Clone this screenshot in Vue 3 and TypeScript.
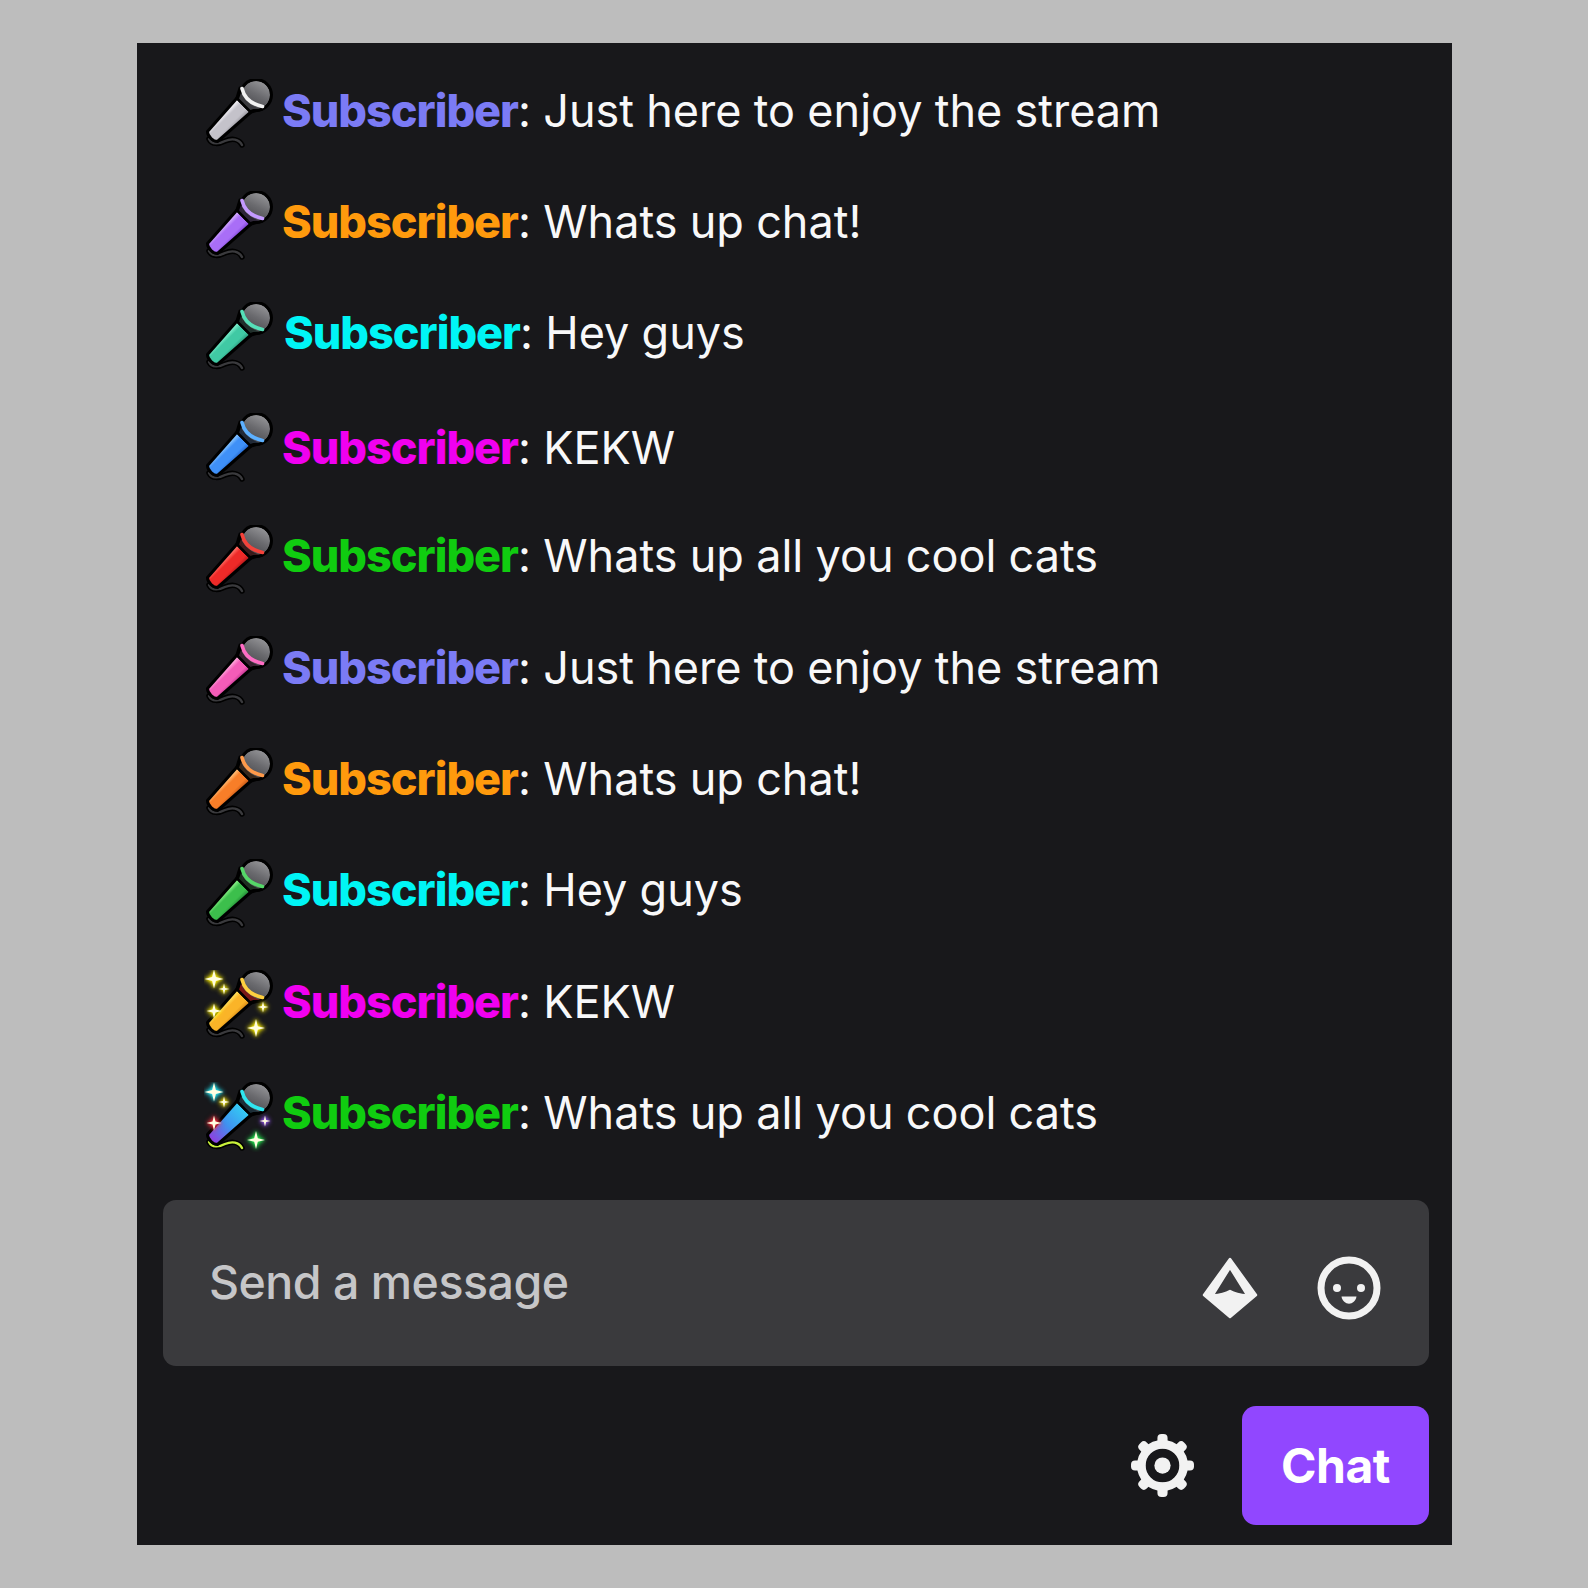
<script setup lang="ts">
interface Spark { x: number; y: number; r: number; c: string }
interface Row {
  msg: string; color: string;
  top: string; mid: string; low: string; band: string; collar: string; cable: string;
  sparks?: Spark[]; nudge?: string; along?: boolean;
}
const gold: Spark[] = [
  { x: 10, y: 9, r: 9.5, c: '#fff200' }, { x: 20, y: 19, r: 5.5, c: '#fff200' },
  { x: 10, y: 41, r: 7.5, c: '#fff200' }, { x: 59, y: 37, r: 5.5, c: '#fff200' }, { x: 52, y: 58, r: 9, c: '#fff200' },
];
const rainbow: Spark[] = [
  { x: 10, y: 10, r: 9.5, c: '#22e8f5' }, { x: 20, y: 20, r: 5.5, c: '#fff200' },
  { x: 10, y: 41, r: 7.5, c: '#ff2a3a' }, { x: 61, y: 39, r: 5.5, c: '#9a55ff' }, { x: 52, y: 58, r: 9, c: '#20f050' },
];
const cord = '#3a3a3d';
const rows: Row[] = [
  { msg: 'Just here to enjoy the stream', color: '#7b7bf5', top: '#eceaf0', mid: '#c4c2ca', low: '#9a98a0', band: '#f2f2f2', collar: '#3a3a3e', cable: cord },
  { msg: 'Whats up chat!', color: '#ff9a0d', top: '#cfa6ff', mid: '#a96ef7', low: '#8144d8', band: '#c39aff', collar: '#2b2336', cable: cord },
  { msg: 'Hey guys', color: '#00f5f5', top: '#78ebc9', mid: '#40c9a4', low: '#2a9a7c', band: '#55dfb8', collar: '#1f2e2a', cable: cord, nudge: 'shift' },
  { msg: 'KEKW', color: '#f000f0', top: '#80c0ff', mid: '#3f90f7', low: '#2468d0', band: '#5cb0ff', collar: '#1f2836', cable: cord, nudge: 'drop' },
  { msg: 'Whats up all you cool cats', color: '#10cc10', top: '#ff6a60', mid: '#ee2a28', low: '#b4181b', band: '#f5423a', collar: '#3a1a1a', cable: cord },
  { msg: 'Just here to enjoy the stream', color: '#7b7bf5', top: '#ffa2da', mid: '#f45cb8', low: '#c2338f', band: '#ff6cc4', collar: '#36202e', cable: cord },
  { msg: 'Whats up chat!', color: '#ff9a0d', top: '#ffb870', mid: '#f87e28', low: '#c65816', band: '#ff9a4a', collar: '#36261a', cable: cord },
  { msg: 'Hey guys', color: '#00f5f5', top: '#80ea80', mid: '#3cbf4c', low: '#238a36', band: '#55d868', collar: '#1c2e1f', cable: cord },
  { msg: 'KEKW', color: '#f000f0', top: '#ffdc55', mid: '#fab428', low: '#d88a16', band: '#ffcf3f', collar: '#7a1616', cable: cord, sparks: gold },
  { msg: 'Whats up all you cool cats', color: '#10cc10', top: '#2ee6f5', mid: '#3f92f0', low: '#8f3fe0', band: '#2fe6f0', collar: '#1a2c36', cable: '#c8f03a', sparks: rainbow, along: true },
];
function star(s: Spark): string {
  const k = s.r * 0.2;
  const { x, y, r } = s;
  return `M${x} ${y - r}L${x + k} ${y - k}L${x + r} ${y}L${x + k} ${y + k}L${x} ${y + r}L${x - k} ${y + k}L${x - r} ${y}L${x - k} ${y - k}Z`;
}
const gearTeeth = [0, 45, 90, 135, 180, 225, 270, 315];
const cablePath = 'M5 60C8 66 15 65 21 62C28 59 35 60 38 66';
</script>

<template>
  <div class="page">
    <main class="panel">
      <ul class="feed">
        <li v-for="(r, i) in rows" :key="i" class="row" :class="r.nudge">
          <svg class="mic" viewBox="0 0 70 70" aria-hidden="true">
            <defs>
              <linearGradient :id="'b' + i" :x1="r.along ? 1 : 0.38" :y1="r.along ? 0 : 0.38" :x2="r.along ? 0 : 0.64" :y2="r.along ? 1 : 0.64">
                <stop offset="0" :stop-color="r.top" />
                <stop :offset="r.along ? 0.55 : 0.25" :stop-color="r.mid" />
                <stop :offset="r.along ? 0.9 : 0.72" :stop-color="r.along ? r.low : r.mid" />
                <stop offset="1" :stop-color="r.low" />
              </linearGradient>
              <linearGradient :id="'h' + i" x1="0.8" y1="0" x2="0.3" y2="1">
                <stop offset="0" stop-color="#98989b" />
                <stop offset="0.5" stop-color="#6a6a6e" />
                <stop offset="1" stop-color="#48484c" />
              </linearGradient>
              <clipPath :id="'c' + i"><circle cx="52" cy="16" r="14" /></clipPath>
            </defs>
            <path :d="cablePath" fill="none" stroke="#000" stroke-width="5.5" stroke-linecap="round" />
            <path :d="cablePath" fill="none" :stroke="r.cable" stroke-width="2.4" stroke-linecap="round" />
            <path d="M47 33L33 19L3.5 52.5Q3.5 56 7 59.5Q10 62.5 13.5 62.5Z" :fill="'url(#b' + i + ')'" stroke="#000" stroke-width="3" stroke-linejoin="round" />
            <path d="M47 33L33 19L36 9L58 30Z" fill="#000" stroke="#000" stroke-width="3" stroke-linejoin="round" />
            <circle cx="52" cy="16" r="17" fill="#000" />
            <path d="M46.5 31L35 19.5L37 14L52 29Z" :fill="r.collar" />
            <g :clip-path="'url(#c' + i + ')'">
              <circle cx="52" cy="16" r="14" :fill="'url(#h' + i + ')'" />
              <path d="M35 8C38 20 46 28 60 31L46 40L28 24Z" :fill="r.collar" />
            </g>
            <path d="M38 9.5C40 18 47 25 58.5 27.5" fill="none" :stroke="r.band" stroke-width="3.6" stroke-linecap="round" />
            <g v-if="r.sparks">
              <path v-for="(s, j) in r.sparks" :key="j" :d="star(s)" fill="#fffde0" class="spark" :style="{ color: s.c }" />
            </g>
          </svg>
          <p class="line"><span class="name" :style="{ color: r.color }">Subscriber</span>: {{ r.msg }}</p>
        </li>
      </ul>

      <div class="composer">
        <span class="placeholder">Send a message</span>
        <div class="tools">
          <svg class="bits" viewBox="0 0 56 62" aria-hidden="true">
            <path fill-rule="evenodd" d="M28 2L54 38L28 60L2 38ZM28 10.5L10.5 38.5Q22 37.5 28 34Q34 37.5 45.5 38.5Z" fill="#f2f2f2" stroke="#f2f2f2" stroke-width="2.5" stroke-linejoin="round" />
          </svg>
          <svg class="smile" viewBox="0 0 64 64" aria-hidden="true">
            <circle cx="32" cy="32" r="28" fill="none" stroke="#f2f2f2" stroke-width="7" />
            <circle cx="20" cy="32" r="4" fill="#f2f2f2" />
            <circle cx="44" cy="32" r="4" fill="#f2f2f2" />
            <path d="M24.5 40.5H39.5C38 50 26 50 24.5 40.5Z" fill="#f2f2f2" />
          </svg>
        </div>
      </div>

      <div class="actions">
        <svg class="gear" viewBox="0 0 64 64" aria-hidden="true">
          <rect v-for="a in gearTeeth" :key="a" x="27" y="1" width="10" height="14" rx="4" fill="#f2f2f2" :transform="`rotate(${a} 32 32)`" />
          <circle cx="32" cy="32" r="20.8" fill="none" stroke="#f2f2f2" stroke-width="8.5" />
          <circle cx="32" cy="32" r="8" fill="#f2f2f2" />
        </svg>
        <button class="chat" type="button">Chat</button>
      </div>
    </main>
  </div>
</template>

<style>
html, body { margin: 0; background: #bdbdbd; }
</style>

<style scoped>
.page {
  width: 1588px;
  height: 1588px;
  box-sizing: border-box;
  padding: 43px 136px 43px 137px;
  background: #bdbdbd;
  font-family: Inter, "Noto Sans", sans-serif;
  font-feature-settings: "calt" 0;
}
.panel {
  height: 100%;
  display: flex;
  flex-direction: column;
  background: #18181b;
  padding: 0 23px 0 26px;
  box-sizing: border-box;
}
.feed {
  list-style: none;
  margin: 0;
  padding: 12px 0 0 41px;
  height: 1157px;
  box-sizing: border-box;
  flex: none;
}
.row {
  height: 111.4px;
  display: flex;
  align-items: center;
  gap: 8px;
}
.mic { width: 70px; height: 70px; flex: none; margin-top: 7px; }
.spark { filter: drop-shadow(0 0 2.5px currentColor) drop-shadow(0 0 1.5px currentColor); }
.line {
  margin: 0;
  color: #f8f8f9;
  font-size: 45px;
  line-height: 56px;
  white-space: nowrap;
  padding-top: 1px;
  padding-bottom: 1px;
  word-spacing: -0.4px;
}
.name { font-weight: 800; letter-spacing: -1px; }
.shift .line { padding-left: 2px; }
.drop .line { padding-top: 6px; padding-bottom: 0; }
.composer {
  height: 166px;
  flex: none;
  display: flex;
  align-items: center;
  justify-content: space-between;
  background: #3a3a3d;
  border-radius: 13px;
  padding: 0 48px 0 46px;
}
.placeholder {
  color: #c6c6c8;
  font-size: 46.5px;
  font-weight: 500;
  letter-spacing: -0.5px;
  padding-bottom: 2px;
}
.tools { display: flex; align-items: center; gap: 59px; padding-top: 10px; }
.bits { width: 56px; height: 62px; }
.smile { width: 64px; height: 64px; }
.actions {
  display: flex;
  align-items: center;
  justify-content: flex-end;
  gap: 47px;
  margin-top: 40px;
}
.gear { width: 65px; height: 65px; }
.chat {
  width: 187px;
  height: 119px;
  border: 0;
  border-radius: 14px;
  background: #9147ff;
  color: #fff;
  font-family: Inter, "Noto Sans", sans-serif;
  font-weight: 700;
  font-size: 48px;
  letter-spacing: -0.5px;
}
</style>
